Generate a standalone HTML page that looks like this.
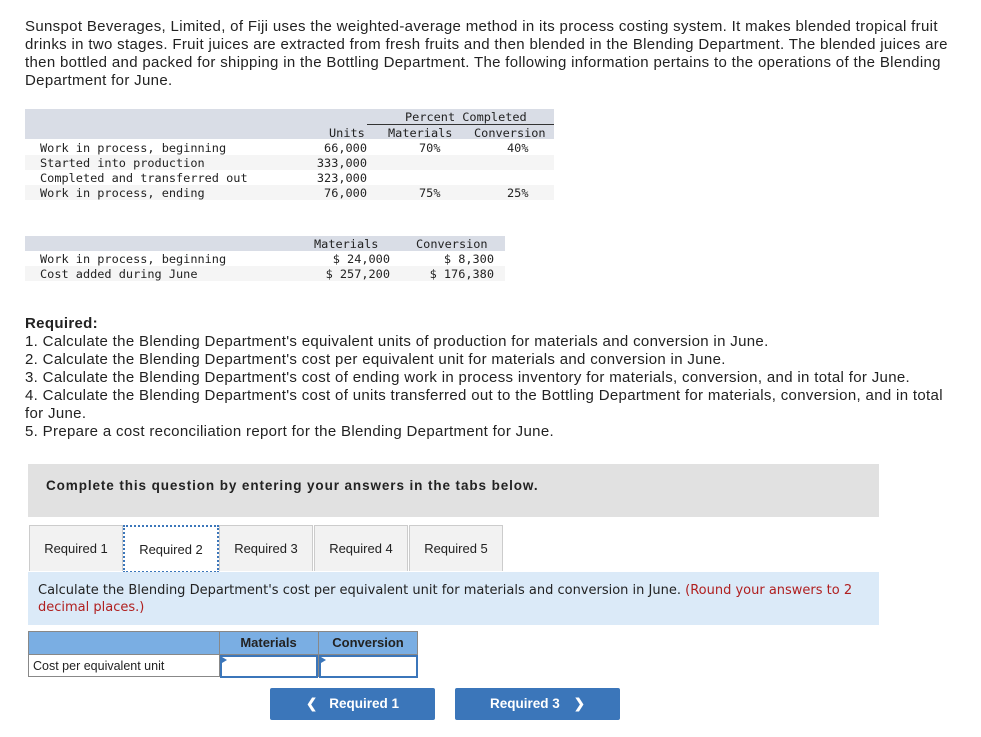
<!DOCTYPE html>
<html><head><style>
body{margin:0;width:981px;height:737px;background:#fff;position:relative;font-family:"Liberation Sans",Arial,sans-serif;color:#222;overflow:hidden}
.a{position:absolute}
.p{left:25px;width:935px;font-size:15px;letter-spacing:0.33px;line-height:18px}
.m{font-family:"DejaVu Sans Mono","Liberation Mono",monospace;font-size:11.9px;line-height:15px;white-space:pre}
.tab{position:absolute;top:525px;height:46px;background:#f2f2f2;border:1px solid #ccc;border-bottom:none;font-size:13px;line-height:46px;text-align:center;box-sizing:border-box}
.btn{position:absolute;top:688px;height:32px;background:#3b76ba;color:#fff;font-weight:bold;font-size:13.5px;line-height:32px;text-align:center;border-radius:2px}
</style></head><body>
<div class="a p" style="top:18px">Sunspot Beverages, Limited, of Fiji uses the weighted-average method in its process costing system. It makes blended tropical fruit drinks in two stages. Fruit juices are extracted from fresh fruits and then blended in the Blending Department. The blended juices are then bottled and packed for shipping in the Bottling Department. The following information pertains to the operations of the Blending Department for June.</div>

<div class="a" style="left:25px;top:109px;width:529px;height:30px;background:#d9dde6"></div>
<div class="a" style="left:25px;top:155px;width:529px;height:15px;background:#f5f5f5"></div>
<div class="a" style="left:25px;top:185px;width:529px;height:15px;background:#f5f5f5"></div>
<div class="a" style="left:367px;top:124px;width:187px;height:1px;background:#333"></div>
<div class="a m" style="left:405px;top:110px">Percent Completed</div>
<div class="a m" style="left:329px;top:126px">Units</div>
<div class="a m" style="left:388px;top:126px">Materials</div>
<div class="a m" style="left:474px;top:126px">Conversion</div>
<div class="a m" style="left:40px;top:141px">Work in process, beginning
Started into production
Completed and transferred out
Work in process, ending</div>
<div class="a m" style="left:290px;top:141px;width:77px;text-align:right">66,000
333,000
323,000
76,000</div>
<div class="a m" style="left:419px;top:141px">70%


75%</div>
<div class="a m" style="left:507px;top:141px">40%


25%</div>

<div class="a" style="left:25px;top:236px;width:480px;height:15px;background:#d9dde6"></div>
<div class="a" style="left:25px;top:266px;width:480px;height:15px;background:#f5f5f5"></div>
<div class="a m" style="left:314px;top:237px">Materials</div>
<div class="a m" style="left:416px;top:237px">Conversion</div>
<div class="a m" style="left:40px;top:252px">Work in process, beginning
Cost added during June</div>
<div class="a m" style="left:300px;top:252px;width:90px;text-align:right">$ 24,000
$ 257,200</div>
<div class="a m" style="left:404px;top:252px;width:90px;text-align:right">$ 8,300
$ 176,380</div>

<div class="a p" style="top:315px"><b>Required:</b><br>1. Calculate the Blending Department's equivalent units of production for materials and conversion in June.<br>2. Calculate the Blending Department's cost per equivalent unit for materials and conversion in June.<br>3. Calculate the Blending Department's cost of ending work in process inventory for materials, conversion, and in total for June.<br>4. Calculate the Blending Department's cost of units transferred out to the Bottling Department for materials, conversion, and in total for June.<br>5. Prepare a cost reconciliation report for the Blending Department for June.</div>

<div class="a" style="left:28px;top:464px;width:851px;height:53px;background:#e1e1e1"></div>
<div class="a" style="left:46px;top:478px;font-weight:bold;font-size:13.5px;letter-spacing:0.9px">Complete this question by entering your answers in the tabs below.</div>

<div class="tab" style="left:29px;width:94px">Required 1</div>
<div class="tab" style="left:123px;width:96px;background:#fff;border:2px dotted #3b76ba;height:48px">Required 2</div>
<div class="tab" style="left:219px;width:94px">Required 3</div>
<div class="tab" style="left:314px;width:94px">Required 4</div>
<div class="tab" style="left:409px;width:94px">Required 5</div>
<div class="a" style="left:28px;top:572px;width:851px;height:53px;background:#dbeaf8"></div>
<div class="a" style="left:38px;top:582px;width:830px;font-family:'DejaVu Sans',sans-serif;font-size:13px;line-height:17px">Calculate the Blending Department's cost per equivalent unit for materials and conversion in June. <span style="color:#b02020">(Round your answers to 2 decimal places.)</span></div>

<div class="a" style="left:28px;top:631px;width:390px;height:46px;border:1px solid #888;box-sizing:border-box"></div>
<div class="a" style="left:29px;top:632px;width:388px;height:22px;background:#7aaee3"></div>
<div class="a" style="left:219px;top:631px;width:1px;height:46px;background:#888"></div>
<div class="a" style="left:318px;top:631px;width:1px;height:46px;background:#888"></div>
<div class="a" style="left:29px;top:654px;width:388px;height:1px;background:#888"></div>
<div class="a" style="left:219px;top:635px;width:99px;text-align:center;font-weight:bold;font-size:13px">Materials</div>
<div class="a" style="left:318px;top:635px;width:100px;text-align:center;font-weight:bold;font-size:13px">Conversion</div>
<div class="a" style="left:33px;top:659px;font-size:12.5px">Cost per equivalent unit</div>
<div class="a" style="left:220px;top:655px;width:94px;height:19px;border:2px solid #3b76ba;background:#fff"></div>
<div class="a" style="left:319px;top:655px;width:95px;height:19px;border:2px solid #3b76ba;background:#fff"></div>
<div class="a" style="left:222px;top:657px;width:0;height:0;border-left:5px solid #3b76ba;border-top:3px solid transparent;border-bottom:3px solid transparent"></div>
<div class="a" style="left:321px;top:657px;width:0;height:0;border-left:5px solid #3b76ba;border-top:3px solid transparent;border-bottom:3px solid transparent"></div>

<div class="btn" style="left:270px;width:165px"><span style="margin-right:12px">&#10094;</span>Required 1</div>
<div class="btn" style="left:455px;width:165px">Required 3<span style="margin-left:14px">&#10095;</span></div>
</body></html>
